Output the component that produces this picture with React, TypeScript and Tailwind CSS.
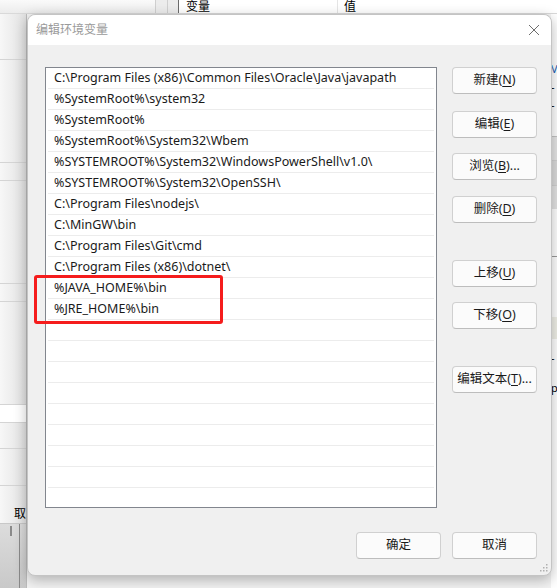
import React from 'react'

const paths = [
  'C:\\Program Files (x86)\\Common Files\\Oracle\\Java\\javapath',
  '%SystemRoot%\\system32',
  '%SystemRoot%',
  '%SystemRoot%\\System32\\Wbem',
  '%SYSTEMROOT%\\System32\\WindowsPowerShell\\v1.0\\',
  '%SYSTEMROOT%\\System32\\OpenSSH\\',
  'C:\\Program Files\\nodejs\\',
  'C:\\MinGW\\bin',
  'C:\\Program Files\\Git\\cmd',
  'C:\\Program Files (x86)\\dotnet\\',
  '%JAVA_HOME%\\bin',
  '%JRE_HOME%\\bin',
]

const rows = [...paths, ...Array(9).fill('')]

const font = { fontFamily: '"Noto Sans", "Noto Sans CJK SC", sans-serif' }

function Btn({ label, hot, tail, className = '' }: { label: string; hot?: string; tail?: string; className?: string }) {
  return (
    <button
      className={`flex h-[27px] w-[85px] shrink-0 items-center justify-center rounded-[4px] border border-[#d0d0d0] border-b-[#bdbdbd] bg-[#fbfbfb] text-[12.5px] text-[#1a1a1a] ${className}`}
    >
      {label}
      {hot && (
        <>
          (<span className="underline underline-offset-2">{hot}</span>)
        </>
      )}
      {tail}
    </button>
  )
}

function Backdrop() {
  return (
    <div className="absolute inset-0 flex flex-col bg-[#f3f3f3]">
      {/* header strip of the window behind */}
      <div className="flex h-[14px] border-b border-[#d9d9d9]">
        <div className="w-[155px] bg-gradient-to-b from-[#fafafa] to-[#ececec]" />
        <div className="w-[12px] border-l border-[#cfcfcf] bg-[#ececec]" />
        <div className="w-[11px] border-l border-[#cfcfcf] bg-[#ececec]" />
        <div className="flex w-[159px] items-end border-l border-[#6b6b6b] bg-white pl-[7px] text-[12px] leading-[13px] text-black">
          变量
        </div>
        <div className="flex flex-1 items-end border-l border-[#e5e5e5] bg-white pl-[6px] text-[12px] leading-[13px] text-black">
          值
        </div>
      </div>
      <div className="flex flex-1">
        <div className="flex w-[27px] flex-col border-r border-[#bdbdbd] bg-gradient-to-r from-[#f7f7f7] to-[#e2e2e2]">
          <div className="h-[46px] border-b border-[#d4d4d4]" />
          <div className="h-[103px] border-b border-[#d4d4d4]" />
          <div className="h-[18px] border-b border-[#d4d4d4]" />
          <div className="h-[103px] border-b border-[#d4d4d4]" />
          <div className="h-[18px] border-b border-[#d4d4d4]" />
          <div className="h-[103px] border-b border-[#d4d4d4]" />
          <div className="h-[18px] border-b border-[#d4d4d4] bg-white" />
          <div className="h-[26px] border-b border-[#d4d4d4]" />
          <div className="h-[37px] border-b border-[#d4d4d4]" />
          <div className="flex h-[38px] items-end justify-end border-b border-[#c8c8c8] pb-0 text-[12px]">取</div>
          <div className="flex flex-1 bg-gradient-to-b from-[#dcdcdc] to-[#c9c9c9] pl-[10px]">
            <div className="mt-[2px] h-[10px] w-[2px] bg-[#8a8a8a]" />
            <div className="ml-[7px] w-px bg-[#8a8a8a]" />
          </div>
        </div>
        <div className="flex-1" />
        <div className="flex w-[6px] flex-col bg-white text-[11px] leading-[18px]">
          <div className="h-[46px]" />
          <div className="text-[#1a5fb4]">V</div>
          <div>-</div>
          <div>-</div>
          <div className="mt-[22px] h-[24px] border-t border-[#c4c4c4] bg-[#e6e6e6]" />
          <div className="h-[25px] border-t border-[#d2d2d2] bg-[#dcdcdc]" />
          <div className="h-[24px] border-t border-[#d2d2d2] bg-[#e4e4e4]" />
          <div className="h-[48px] border-b border-[#9a9a9a]" />
          <div className="mt-[60px] h-[22px] bg-[#f0f0e8]" />
          <div className="mt-[10px]">-</div>
          <div className="mt-[12px]">p</div>
        </div>
      </div>
    </div>
  )
}

export default function App() {
  return (
    <div className="relative h-[588px] w-[557px] overflow-hidden" style={font}>
      <Backdrop />

      {/* the dialog window */}
      <div className="absolute left-[27px] top-[14px] flex h-[562px] w-[525px] flex-col rounded-[8px] border border-[#c4c4c4] bg-[#f0f0f0] shadow-[0_4px_14px_rgba(0,0,0,0.28)]">
        <div className="flex h-[30px] shrink-0 items-center justify-between rounded-t-[8px] bg-white pl-[8px] pr-[8px]">
          <span className="text-[12px] text-[#9a9a9a]">编辑环境变量</span>
          <svg width="12" height="12" viewBox="0 0 12 12" className="mr-[3px]">
            <path d="M1 1 L11 11 M11 1 L1 11" stroke="#6e6e6e" strokeWidth="1" />
          </svg>
        </div>

        <div className="flex flex-1 flex-col pl-[17px] pr-[14px] pt-[22px]">
          <div className="flex gap-[15px]">
            <div className="relative shrink-0">
              <div className="h-[441px] w-[392px] overflow-hidden border border-[#82868e] bg-white">
                {rows.map((r, i) => (
                  <div
                    key={i}
                    className="mx-[2px] flex h-[21px] items-center border-b border-[#ececec] pl-[6px] text-[12.5px] text-[#1a1a1a]"
                  >
                    {r}
                  </div>
                ))}
              </div>
              {/* red highlight marker drawn over the list */}
              <div className="pointer-events-none absolute left-[-11px] top-[208px] h-[49px] w-[189px] rounded-[3px] border-[3px] border-[#f51c1c]" />
            </div>

            <div className="flex flex-col">
              <Btn label="新建" hot="N" />
              <Btn label="编辑" hot="E" className="mt-[17px]" />
              <Btn label="浏览" hot="B" tail="..." className="mt-[15px]" />
              <Btn label="删除" hot="D" className="mt-[16px]" />
              <Btn label="上移" hot="U" className="mt-[37px]" />
              <Btn label="下移" hot="O" className="mt-[15px]" />
              <Btn label="编辑文本" hot="T" tail="..." className="mt-[37px]" />
            </div>
          </div>

          <div className="mt-[24px] flex justify-end gap-[11px]">
            <Btn label="确定" />
            <Btn label="取消" />
          </div>
        </div>

        <svg width="8" height="8" viewBox="0 0 8 8" className="absolute bottom-[3px] right-[3px]">
          <rect x="6" y="0" width="1.5" height="1.5" fill="#b0b0b0" />
          <rect x="3" y="3" width="1.5" height="1.5" fill="#b0b0b0" />
          <rect x="6" y="3" width="1.5" height="1.5" fill="#b0b0b0" />
          <rect x="0" y="6" width="1.5" height="1.5" fill="#b0b0b0" />
          <rect x="3" y="6" width="1.5" height="1.5" fill="#b0b0b0" />
          <rect x="6" y="6" width="1.5" height="1.5" fill="#b0b0b0" />
        </svg>
      </div>
    </div>
  )
}
